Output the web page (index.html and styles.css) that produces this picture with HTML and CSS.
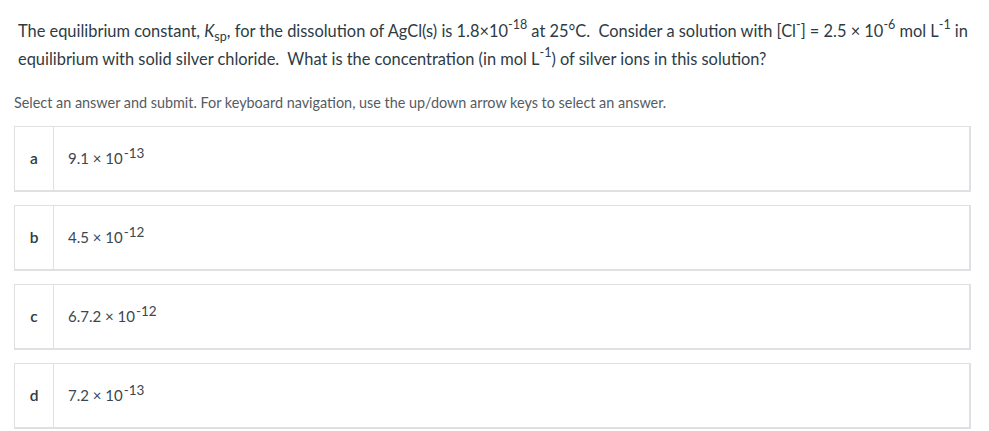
FILE: index.html
```html
<!DOCTYPE html>
<html>
<head>
<meta charset="utf-8">
<link rel="stylesheet" href="styles.css">
</head>
<body>
<div class="page">
  <p class="question">The equilibrium constant, <i>K</i><sub>sp</sub>, for the dissolution of AgCl(s) is 1.8×10<sup>-18</sup> at 25°C.&nbsp; Consider a solution with [Cl<sup>-</sup>] = 2.5 × 10<sup>-6</sup> mol L<sup>-1</sup> in equilibrium with solid silver chloride.&nbsp; What is the concentration (in mol L<sup>-1</sup>) of silver ions in this solution?</p>
  <p class="hint">Select an answer and submit. For keyboard navigation, use the up/down arrow keys to select an answer.</p>
  <div class="answers">
    <div class="answer"><div class="letter">a</div><div class="text"><span>9.1 × 10<sup>-13</sup></span></div></div>
    <div class="answer"><div class="letter">b</div><div class="text"><span>4.5 × 10<sup>-12</sup></span></div></div>
    <div class="answer"><div class="letter">c</div><div class="text"><span>6.7.2 × 10<sup>-12</sup></span></div></div>
    <div class="answer"><div class="letter">d</div><div class="text"><span>7.2 × 10<sup>-13</sup></span></div></div>
  </div>
</div>
</body>
</html>
```
FILE: styles.css
```css
* { box-sizing: border-box; }
body {
  margin: 0;
  background: #fff;
  font-family: Lato, "Open Sans", sans-serif;
  color: #2d3b45;
}
.page {
  padding: 17px 18px 0 14px;
}
.question {
  margin: 0 0 0 4px;
  font-size: 16.4px;
  line-height: 28px;
}
.question sup {
  font-size: 12.5px;
  line-height: 0;
  vertical-align: 8px;
}
.question sub {
  font-size: 12.5px;
  line-height: 0;
  vertical-align: -4px;
}
.hint {
  margin: 20px 0 0 0;
  font-size: 14.4px;
  line-height: 20px;
  color: #555c63;
}
.answers {
  margin-top: 13px;
  display: flex;
  flex-direction: column;
  gap: 13px;
}
.answer {
  display: flex;
  height: 66px;
  border: 1px solid #dfe0e4;
  border-right-width: 2px;
  border-bottom-width: 2px;
}
.letter {
  width: 39px;
  border-right: 1px solid #dfe0e4;
  display: flex;
  align-items: center;
  justify-content: center;
  font-size: 15.5px;
  font-weight: 600;
  color: #2d3b45;
  padding-bottom: 2px;
}
.text {
  display: flex;
  align-items: center;
  padding-left: 14px;
  padding-bottom: 2px;
  font-size: 15px;
  color: #3a4752;
}
.text sup {
  font-size: 13.5px;
  line-height: 0;
  vertical-align: 6px;
  margin-left: 1px;
}
```
